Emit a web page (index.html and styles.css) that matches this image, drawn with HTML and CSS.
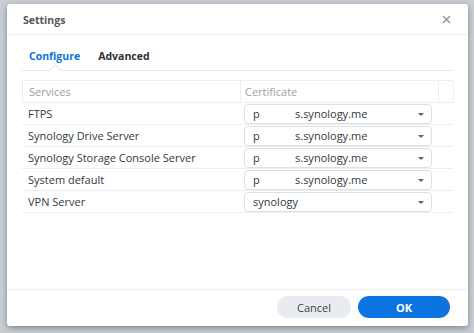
FILE: index.html
```html
<!DOCTYPE html>
<html lang="en">
<head>
  <meta charset="UTF-8">
  <title>Settings</title>
  <link rel="stylesheet" href="styles.css">
</head>
<body>
  <div class="dialog">
    <div class="header">
      <div class="title">Settings</div>
      <svg class="close" width="9" height="9" viewBox="0 0 9 9"><path d="M1 1L8 8M8 1L1 8" stroke="#8e9398" stroke-width="1.4" fill="none"/></svg>
    </div>
    <div class="tabs">
      <span class="tab current">Configure</span>
      <span class="tab">Advanced</span>
    </div>
    <div class="grid">
      <div class="row head">
        <div class="cell">Services</div>
        <div class="cell">Certificate</div>
        <div class="cell"></div>
      </div>
      <div class="row">
        <div class="cell">FTPS</div>
        <div class="cell"><div class="select"><span class="pre">p</span><span>s.synology.me</span><i class="arrow"></i></div></div>
        <div class="cell"></div>
      </div>
      <div class="row">
        <div class="cell">Synology Drive Server</div>
        <div class="cell"><div class="select"><span class="pre">p</span><span>s.synology.me</span><i class="arrow"></i></div></div>
        <div class="cell"></div>
      </div>
      <div class="row">
        <div class="cell">Synology Storage Console Server</div>
        <div class="cell"><div class="select"><span class="pre">p</span><span>s.synology.me</span><i class="arrow"></i></div></div>
        <div class="cell"></div>
      </div>
      <div class="row">
        <div class="cell">System default</div>
        <div class="cell"><div class="select"><span class="pre">p</span><span>s.synology.me</span><i class="arrow"></i></div></div>
        <div class="cell"></div>
      </div>
      <div class="row">
        <div class="cell">VPN Server</div>
        <div class="cell"><div class="select"><span>synology</span><i class="arrow"></i></div></div>
        <div class="cell"></div>
      </div>
    </div>
    <div class="footer">
      <span class="btn cancel">Cancel</span>
      <span class="btn ok">OK</span>
    </div>
  </div>
</body>
</html>
```

FILE: styles.css
```css
* {
  margin: 0;
  padding: 0;
  box-sizing: border-box;
}
body {
  width: 474px;
  height: 333px;
  padding: 4px 6px 7px 7px;
  background: #c9ced5;
  font-family: "Open Sans", "Noto Sans", sans-serif;
  font-size: 11px;
  color: #333940;
  overflow: hidden;
}
.dialog {
  width: 461px;
  height: 322px;
  background: #fff;
  border-radius: 3px;
  box-shadow: 0 2px 6px rgba(0,0,0,0.35);
  display: flex;
  flex-direction: column;
}
.header {
  height: 31px;
  border-bottom: 1px solid #eceef0;
  display: flex;
  align-items: center;
  justify-content: space-between;
  padding: 1px 17px 0 16px;
}
.title {
  font-weight: 700;
  color: #50565c;
  font-size: 10.5px;
}
.tabs {
  margin: 0 15px;
  height: 36px;
  border-bottom: 1px solid #e6e8eb;
  display: flex;
  align-items: flex-end;
  gap: 18px;
  padding: 0 0 7px 7px;
}
.tab {
  font-weight: 700;
  color: #2d3238;
  font-size: 10.5px;
}
.tab.current {
  color: #0a74da;
  position: relative;
}
.tab.current::after {
  content: "";
  position: absolute;
  left: 50%;
  bottom: -12px;
  width: 8px;
  height: 8px;
  margin-left: -4px;
  background: #fff;
  border-left: 1px solid #e6e8eb;
  border-top: 1px solid #e6e8eb;
  transform: rotate(45deg);
}
.grid {
  margin: 9px 15px 0 15px;
}
.row {
  display: grid;
  grid-template-columns: 218px 198px 15px;
  height: 22px;
  border-bottom: 1px solid #eceef0;
}
.row.head {
  border-top: 1px solid #eceef0;
  border-left: 1px solid #eceef0;
  height: 23px;
}
.row.head .cell {
  color: #9a9ea3;
  border-right: 1px solid #eceef0;
  padding-left: 6px;
}
.cell {
  display: flex;
  align-items: center;
  padding-left: 6px;
  white-space: nowrap;
}
.row .cell:nth-child(2) {
  padding-left: 4px;
}
.select {
  width: 188px;
  height: 20px;
  border: 1px solid #dde0e4;
  border-radius: 4px;
  display: flex;
  align-items: center;
  padding: 0 8px 0 8px;
  position: relative;
}
.select .pre {
  width: 42px;
}
.arrow {
  position: absolute;
  right: 7px;
  top: 8px;
  width: 0;
  height: 0;
  border-left: 3px solid transparent;
  border-right: 3px solid transparent;
  border-top: 3px solid #5f6468;
}
.footer {
  margin-top: auto;
  height: 37px;
  border-top: 1px solid #eceef0;
  display: flex;
  align-items: center;
  justify-content: flex-end;
  gap: 7px;
  padding: 1px 18px 3px 0;
}
.btn {
  height: 22px;
  border-radius: 11px;
  display: flex;
  align-items: center;
  justify-content: center;
  font-size: 11px;
}
.cancel {
  width: 74px;
  background: #e8ecf1;
  color: #3b4148;
}
.ok {
  width: 92px;
  background: #0b74de;
  color: #fff;
  font-weight: 700;
}
```
